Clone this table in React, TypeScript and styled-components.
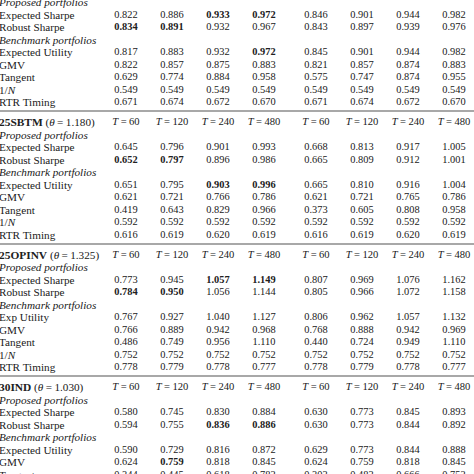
import React from "react";
import styled, { createGlobalStyle } from "styled-components";

const GlobalStyle = createGlobalStyle`
  html, body {
    margin: 0;
    padding: 0;
    background: #ffffff;
    overflow: hidden;
  }
`;

const Page = styled.div`
  width: 474px;
  height: 474px;
  overflow: hidden;
  background: #ffffff;
  color: #202020;
  font-family: "Liberation Serif", "DejaVu Serif", serif;
`;

const Table = styled.div`
  margin-top: -3.6px;
  margin-left: -1px;
  width: 490px;
`;

const Block = styled.section`
  display: flex;
  flex-direction: column;
`;

const Rule = styled.div`
  height: 0;
  border-top: 2px solid #a8a8a8;
  margin: 1.4px 0 4px;
`;

const Row = styled.div`
  display: flex;
  height: 12.5px;
  line-height: 12.5px;
  white-space: nowrap;
`;

const Label = styled.div<{ $italic?: boolean }>`
  width: 104px;
  flex: none;
  font-size: 11.2px;
  font-style: ${(p) => (p.$italic ? "italic" : "normal")};
`;

const SetName = styled.span`
  font-weight: bold;
  font-size: 11.4px;
`;

const Group = styled.div`
  display: grid;
  grid-template-columns: repeat(4, 46px);
  flex: none;

  & + & {
    margin-left: 6px;
  }
`;

const Cell = styled.div<{ $bold?: boolean }>`
  text-align: center;
  font-size: 10.4px;
  font-weight: ${(p) => (p.$bold ? "bold" : "normal")};
`;

const HeadCell = styled.div`
  text-align: center;
  font-size: 10.6px;
`;

const Op = styled.span`
  margin: 0 2.4px;
`;

const Var = styled.i`
  font-style: italic;
`;

type Val = string;
// "*" prefix marks a bold value
type Line = { label: React.ReactNode; vals: Val[] };

type Dataset = {
  name?: string;
  theta?: string;
  proposed: Line[];
  bench: Line[];
};

const N = (
  <>
    1/<Var>N</Var>
  </>
);

const data: Dataset[] = [
  {
    proposed: [
      { label: "Expected Sharpe", vals: ["0.822", "0.886", "*0.933", "*0.972", "0.846", "0.901", "0.944", "0.982"] },
      { label: "Robust Sharpe", vals: ["*0.834", "*0.891", "0.932", "0.967", "0.843", "0.897", "0.939", "0.976"] },
    ],
    bench: [
      { label: "Expected Utility", vals: ["0.817", "0.883", "0.932", "*0.972", "0.845", "0.901", "0.944", "0.982"] },
      { label: "GMV", vals: ["0.822", "0.857", "0.875", "0.883", "0.821", "0.857", "0.874", "0.883"] },
      { label: "Tangent", vals: ["0.629", "0.774", "0.884", "0.958", "0.575", "0.747", "0.874", "0.955"] },
      { label: N, vals: Array(8).fill("0.549") },
      { label: "RTR Timing", vals: ["0.671", "0.674", "0.672", "0.670", "0.671", "0.674", "0.672", "0.670"] },
    ],
  },
  {
    name: "25SBTM",
    theta: "1.180",
    proposed: [
      { label: "Expected Sharpe", vals: ["0.645", "0.796", "0.901", "0.993", "0.668", "0.813", "0.917", "1.005"] },
      { label: "Robust Sharpe", vals: ["*0.652", "*0.797", "0.896", "0.986", "0.665", "0.809", "0.912", "1.001"] },
    ],
    bench: [
      { label: "Expected Utility", vals: ["0.651", "0.795", "*0.903", "*0.996", "0.665", "0.810", "0.916", "1.004"] },
      { label: "GMV", vals: ["0.621", "0.721", "0.766", "0.786", "0.621", "0.721", "0.765", "0.786"] },
      { label: "Tangent", vals: ["0.419", "0.643", "0.829", "0.966", "0.373", "0.605", "0.808", "0.958"] },
      { label: N, vals: Array(8).fill("0.592") },
      { label: "RTR Timing", vals: ["0.616", "0.619", "0.620", "0.619", "0.616", "0.619", "0.620", "0.619"] },
    ],
  },
  {
    name: "25OPINV",
    theta: "1.325",
    proposed: [
      { label: "Expected Sharpe", vals: ["0.773", "0.945", "*1.057", "*1.149", "0.807", "0.969", "1.076", "1.162"] },
      { label: "Robust Sharpe", vals: ["*0.784", "*0.950", "1.056", "1.144", "0.805", "0.966", "1.072", "1.158"] },
    ],
    bench: [
      { label: "Exp Utility", vals: ["0.767", "0.927", "1.040", "1.127", "0.806", "0.962", "1.057", "1.132"] },
      { label: "GMV", vals: ["0.766", "0.889", "0.942", "0.968", "0.768", "0.888", "0.942", "0.969"] },
      { label: "Tangent", vals: ["0.486", "0.749", "0.956", "1.110", "0.440", "0.724", "0.949", "1.110"] },
      { label: N, vals: Array(8).fill("0.752") },
      { label: "RTR Timing", vals: ["0.778", "0.779", "0.778", "0.777", "0.778", "0.779", "0.778", "0.777"] },
    ],
  },
  {
    name: "30IND",
    theta: "1.030",
    proposed: [
      { label: "Expected Sharpe", vals: ["0.580", "0.745", "0.830", "0.884", "0.630", "0.773", "0.845", "0.893"] },
      { label: "Robust Sharpe", vals: ["0.594", "0.755", "*0.836", "*0.886", "0.630", "0.773", "0.844", "0.892"] },
    ],
    bench: [
      { label: "Expected Utility", vals: ["0.590", "0.729", "0.816", "0.872", "0.629", "0.773", "0.844", "0.888"] },
      { label: "GMV", vals: ["0.624", "*0.759", "0.818", "0.845", "0.624", "0.759", "0.818", "0.845"] },
      { label: "Tangent", vals: ["0.344", "0.445", "0.618", "0.782", "0.303", "0.483", "0.666", "0.752"] },
    ],
  },
];

const horizons = ["60", "120", "240", "480"];

const Values = ({ vals }: { vals: Val[] }) => (
  <>
    {[vals.slice(0, 4), vals.slice(4, 8)].map((g, gi) => (
      <Group key={gi}>
        {g.map((v, i) => (
          <Cell key={i} $bold={v.startsWith("*")}>
            {v.replace("*", "")}
          </Cell>
        ))}
      </Group>
    ))}
  </>
);

const HeaderRow = ({ name, theta }: { name: string; theta: string }) => (
  <Row>
    <Label>
      <SetName>{name}</SetName> (<Var>θ</Var>
      <Op>=</Op>
      {theta})
    </Label>
    {[0, 1].map((g) => (
      <Group key={g}>
        {horizons.map((h) => (
          <HeadCell key={h}>
            <Var>T</Var>
            <Op>=</Op>
            {h}
          </HeadCell>
        ))}
      </Group>
    ))}
  </Row>
);

const DataRow = ({ line }: { line: Line }) => (
  <Row>
    <Label>{line.label}</Label>
    <Values vals={line.vals} />
  </Row>
);

const DatasetBlock = ({ set }: { set: Dataset }) => (
  <Block>
    {set.name && set.theta && <HeaderRow name={set.name} theta={set.theta} />}
    <Row>
      <Label $italic>Proposed portfolios</Label>
    </Row>
    {set.proposed.map((l, i) => (
      <DataRow key={i} line={l} />
    ))}
    <Row>
      <Label $italic>Benchmark portfolios</Label>
    </Row>
    {set.bench.map((l, i) => (
      <DataRow key={i} line={l} />
    ))}
  </Block>
);

export default function App() {
  return (
    <Page>
      <GlobalStyle />
      <Table>
        {data.map((set, i) => (
          <React.Fragment key={i}>
            {i > 0 && <Rule />}
            <DatasetBlock set={set} />
          </React.Fragment>
        ))}
      </Table>
    </Page>
  );
}
